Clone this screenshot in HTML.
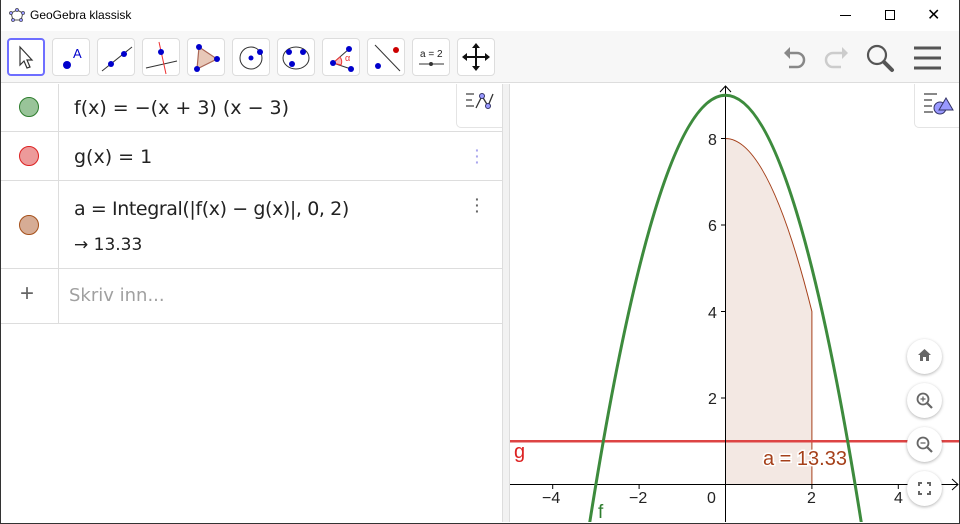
<!DOCTYPE html>
<html style="overflow:hidden"><head><style>
*{box-sizing:border-box;margin:0;padding:0}
html,body{width:960px;height:524px;overflow:hidden}
body{background:#fff;font-family:"Liberation Sans",sans-serif;position:relative}
.win{position:absolute;left:0;top:0;width:960px;height:524px;border:1px solid #333;border-top:none}
.title{position:absolute;left:0;top:0;width:960px;height:31px;background:#fff}
.tb{position:absolute;left:1px;top:31px;width:958px;height:52px;background:#f7f7f7;border-bottom:1px solid #ddd}
.btn{position:absolute;top:7px;width:38px;height:38px;background:#fff;border:1px solid #ddd;border-radius:4px}
.row{position:absolute;left:1px;width:501px;border-bottom:1px solid #ddd}
.dot{position:absolute;left:18px;width:20px;height:20px;border-radius:50%}
.tx{position:absolute;left:73px;font-size:19px;color:#222;font-family:"DejaVu Sans","Liberation Sans",sans-serif;white-space:nowrap}
</style></head><body>
<div class="title">
<svg style="position:absolute;left:9px;top:8px" width="16" height="14"><polygon points="8,2 14,5 12,12 4,12 2,5" fill="none" stroke="#555" stroke-width="1"/><g fill="#99f" stroke="#333" stroke-width=".6"><circle cx="8" cy="2" r="1.6"/><circle cx="14" cy="5" r="1.6"/><circle cx="12" cy="12" r="1.6"/><circle cx="4" cy="12" r="1.6"/><circle cx="2" cy="5" r="1.6"/></g></svg>
<div style="position:absolute;left:30px;top:8px;font-size:12px;color:#000">GeoGebra klassisk</div>
<div style="position:absolute;left:840px;top:15px;width:11px;height:1px;background:#000"></div>
<div style="position:absolute;left:885px;top:10px;width:10px;height:10px;border:1px solid #000"></div>
<div style="position:absolute;left:927px;top:5px;font-size:16px;color:#000">✕</div>
</div>
<div class="tb">
<div class="btn" style="left:6px;border:2px solid #6e6eff"><svg width="34" height="34"><path d="M11 7 L11 25 L15 21 L18 28 L21 27 L18 20 L23 20 Z" fill="#fff" stroke="#333" stroke-width="1.2"/></svg></div>
<div class="btn" style="left:51px"><svg width="36" height="36"><circle cx="14" cy="26" r="4" fill="#00c"/><text x="20" y="19" font-size="13" fill="#00c" font-family="Liberation Sans">A</text></svg></div>
<div class="btn" style="left:96px"><svg width="36" height="36"><line x1="4" y1="32" x2="34" y2="8" stroke="#333"/><circle cx="13" cy="25" r="3" fill="#00c"/><circle cx="26" cy="15" r="3" fill="#00c"/></svg></div>
<div class="btn" style="left:141px"><svg width="36" height="36"><line x1="3" y1="29" x2="34" y2="22" stroke="#333"/><line x1="16" y1="3" x2="23" y2="35" stroke="#e33"/><circle cx="18" cy="13" r="3" fill="#00c"/></svg></div>
<div class="btn" style="left:186px"><svg width="36" height="36"><polygon points="11,8 29,20 9,30" fill="#e8c8b8" stroke="#a65" stroke-width="1.2"/><circle cx="11" cy="8" r="3" fill="#00c"/><circle cx="29" cy="20" r="3" fill="#00c"/><circle cx="9" cy="30" r="3" fill="#00c"/></svg></div>
<div class="btn" style="left:231px"><svg width="36" height="36"><circle cx="18" cy="19" r="11" fill="none" stroke="#333"/><circle cx="18" cy="19" r="2.5" fill="#00c"/><circle cx="27" cy="13" r="3" fill="#00c"/></svg></div>
<div class="btn" style="left:276px"><svg width="36" height="36"><ellipse cx="18" cy="19" rx="13" ry="11" fill="none" stroke="#333"/><circle cx="11" cy="13" r="3" fill="#00c"/><circle cx="25" cy="13" r="3" fill="#00c"/><circle cx="14" cy="25" r="3" fill="#00c"/></svg></div>
<div class="btn" style="left:321px"><svg width="36" height="36"><path d="M10 24 L26 10 M10 24 L28 30" stroke="#333" fill="none"/><path d="M10 24 L17 18 A8 8 0 0 1 18 26 Z" fill="#f9c0c0" stroke="#e33"/><text x="22" y="22" font-size="9" fill="#e33">α</text><circle cx="10" cy="24" r="3" fill="#00c"/><circle cx="26" cy="10" r="3" fill="#00c"/><circle cx="28" cy="30" r="3" fill="#00c"/></svg></div>
<div class="btn" style="left:366px"><svg width="36" height="36"><line x1="7" y1="6" x2="32" y2="32" stroke="#333"/><circle cx="28" cy="11" r="3" fill="#c00"/><circle cx="10" cy="27" r="3" fill="#00c"/></svg></div>
<div class="btn" style="left:411px"><svg width="36" height="36"><text x="7" y="18" font-size="10" fill="#222">a = 2</text><line x1="6" y1="25" x2="31" y2="25" stroke="#333"/><circle cx="18" cy="25" r="2" fill="#333"/></svg></div>
<div class="btn" style="left:456px"><svg width="36" height="36"><path d="M18 6 V30 M6 18 H30" stroke="#111" stroke-width="2"/><path d="M18 4 l-4 5 h8z M18 32 l-4 -5 h8z M4 18 l5 -4 v8z M32 18 l-5 -4 v8z" fill="#111"/></svg></div>
<svg style="position:absolute;left:780px;top:12px" width="70" height="30"><path d="M6 10 H16 A7 7 0 0 1 16 24 H8" fill="none" stroke="#888" stroke-width="2.5"/><path d="M3 10 l6 -6 v12z" fill="#888"/><path d="M64 10 H52 A7 7 0 0 0 52 24 H60" fill="none" stroke="#ccc" stroke-width="2.5"/><path d="M67 10 l-6 -6 v12z" fill="#ccc"/></svg>
<svg style="position:absolute;left:864px;top:12px" width="32" height="32"><circle cx="12" cy="12" r="9" fill="none" stroke="#555" stroke-width="2.2"/><line x1="19" y1="19" x2="27" y2="27" stroke="#555" stroke-width="4" stroke-linecap="round"/></svg>
<svg style="position:absolute;left:912px;top:14px" width="30" height="26"><path d="M1 3 H28 M1 13 H28 M1 23 H28" stroke="#555" stroke-width="3"/></svg>
</div>
<div style="position:absolute;left:502px;top:84px;width:8px;height:438px;background:#f2f2f2;border-left:1px solid #ddd;border-right:1px solid #ddd"></div>
<div style="position:absolute;left:58px;top:84px;width:1px;height:239px;background:#ddd"></div>
<div class="row" style="top:84px;height:48px"><div class="dot" style="top:13px;background:#99c499;border:1px solid #2e7d2e"></div><div class="tx" style="top:13px">f(x) = −(x + 3) (x − 3)</div></div>
<div style="position:absolute;left:456px;top:84px;width:46px;height:44px;background:#fff;border:1px solid #e4e4e4;border-radius:0 0 0 5px;border-top:none;border-right:none"><svg width="46" height="44"><path d="M9 10 H17 M9 16 H15 M9 22 H17" stroke="#888" stroke-width="2"/><path d="M19 24 L25 12 L31 22 L36 10" fill="none" stroke="#333" stroke-width="1.3"/><circle cx="25" cy="12" r="2.5" fill="#99f" stroke="#336"/><circle cx="31" cy="22" r="2.5" fill="#99f" stroke="#336"/></svg></div>
<div class="row" style="top:132px;height:49px"><div class="dot" style="top:14px;background:#ed9a9a;border:1px solid #d22"></div><div class="tx" style="top:14px">g(x) = 1</div><div style="position:absolute;left:474px;top:15px;color:#aaa6ee;font-size:14px;line-height:6px;font-weight:bold">·<br>·<br>·</div></div>
<div class="row" style="top:181px;height:88px"><div class="dot" style="top:34px;background:#d6ac95;border:1px solid #a5501a"></div><div class="tx" style="top:17px;letter-spacing:-0.4px">a = Integral(|f(x) − g(x)|, 0, 2)</div><div class="tx" style="top:54px;font-size:17px">→ 13.33</div><div style="position:absolute;left:474px;top:15px;color:#666;font-size:14px;line-height:6px;font-weight:bold">·<br>·<br>·</div></div>
<div class="row" style="top:269px;height:55px"><div style="position:absolute;left:19px;top:11px;font-size:24px;color:#666">+</div><div class="tx" style="top:16px;left:68px;font-size:18px;color:#a0a0a0">Skriv inn...</div></div>
<svg style="position:absolute;left:0;top:0" width="960" height="524">
<defs><clipPath id="c"><rect x="510" y="84" width="449" height="438"/></clipPath></defs>
<g clip-path="url(#c)">
<path d="M725.5 484.5 V138.5 Q768.7 138.5 811.9 311.5 V484.5 Z" fill="#f3e8e3" stroke="#a5401a" stroke-width="1"/>
<line x1="510" y1="441.3" x2="960" y2="441.3" stroke="#dd4444" stroke-width="2.5"/>
<line x1="510" y1="484.5" x2="958" y2="484.5" stroke="#000"/>
<line x1="725.5" y1="86" x2="725.5" y2="522" stroke="#000"/>
<path d="M720 92 L725.5 86 L731 92 M952 479 L958 484.5 L952 490" fill="none" stroke="#000"/>
<g stroke="#000"><line x1="552.7" y1="484.5" x2="552.7" y2="489"/><line x1="639.1" y1="484.5" x2="639.1" y2="489"/><line x1="811.9" y1="484.5" x2="811.9" y2="489"/><line x1="898.3" y1="484.5" x2="898.3" y2="489"/><line x1="721" y1="398" x2="725.5" y2="398"/><line x1="721" y1="311.5" x2="725.5" y2="311.5"/><line x1="721" y1="225" x2="725.5" y2="225"/><line x1="721" y1="138.5" x2="725.5" y2="138.5"/></g>
<path d="M574.3 625 Q725.5 -434.6 876.7 625" fill="none" stroke="#3d8b3d" stroke-width="3"/>
<g font-family="Liberation Sans" font-size="16" fill="#222"><text x="542" y="503">−4</text><text x="629" y="503">−2</text><text x="707" y="503">0</text><text x="807" y="503">2</text><text x="894" y="503">4</text><text x="708" y="145">8</text><text x="708" y="231">6</text><text x="708" y="318">4</text><text x="708" y="404">2</text></g>
<text x="514" y="458" font-size="20" fill="#d22" font-family="Liberation Sans">g</text>
<text x="598" y="518" font-size="19" fill="#2e7d2e" font-family="Liberation Sans">f</text>
<text x="763" y="465" font-size="20" fill="#a5401a" stroke="#fff" stroke-width="3" paint-order="stroke" font-family="Liberation Sans">a = 13.33</text>
</g>
</svg>
<div style="position:absolute;left:914px;top:84px;width:46px;height:44px;background:#fff;border:1px solid #e4e4e4;border-top:none;border-right:none;border-radius:0 0 0 5px"><svg width="46" height="44"><path d="M9 10 H22 M9 16 H17 M9 22 H17 M9 28 H18" stroke="#888" stroke-width="2"/><circle cx="25" cy="24" r="6" fill="#99f" stroke="#336"/><path d="M24 26 L31 14 L38 26 Z" fill="#99f" stroke="#336"/></svg></div>
<div style="position:absolute;left:907px;top:339px;width:35px;height:35px;border-radius:50%;background:#fff;box-shadow:0 1px 3px rgba(0,0,0,.3)"><svg width="35" height="35"><path d="M17.5 10 L11 16 H13 V22 H16 V18 H19 V22 H22 V16 H24 Z" fill="#666"/></svg></div>
<div style="position:absolute;left:907px;top:383px;width:35px;height:35px;border-radius:50%;background:#fff;box-shadow:0 1px 3px rgba(0,0,0,.3)"><svg width="35" height="35"><circle cx="16" cy="16" r="5.5" fill="none" stroke="#666" stroke-width="1.8"/><line x1="20" y1="20" x2="25" y2="25" stroke="#666" stroke-width="2.2"/><path d="M16 13.5 V18.5 M13.5 16 H18.5" stroke="#666" stroke-width="1.3"/></svg></div>
<div style="position:absolute;left:907px;top:427px;width:35px;height:35px;border-radius:50%;background:#fff;box-shadow:0 1px 3px rgba(0,0,0,.3)"><svg width="35" height="35"><circle cx="16" cy="16" r="5.5" fill="none" stroke="#666" stroke-width="1.8"/><line x1="20" y1="20" x2="25" y2="25" stroke="#666" stroke-width="2.2"/><path d="M13.5 16 H18.5" stroke="#666" stroke-width="1.3"/></svg></div>
<div style="position:absolute;left:907px;top:471px;width:35px;height:35px;border-radius:50%;background:#fff;box-shadow:0 1px 3px rgba(0,0,0,.3)"><svg width="35" height="35"><path d="M12 15 V12 H15 M20 12 H23 V15 M23 20 V23 H20 M15 23 H12 V20" fill="none" stroke="#666" stroke-width="2"/></svg></div>
<div class="win"></div>
</body></html>
